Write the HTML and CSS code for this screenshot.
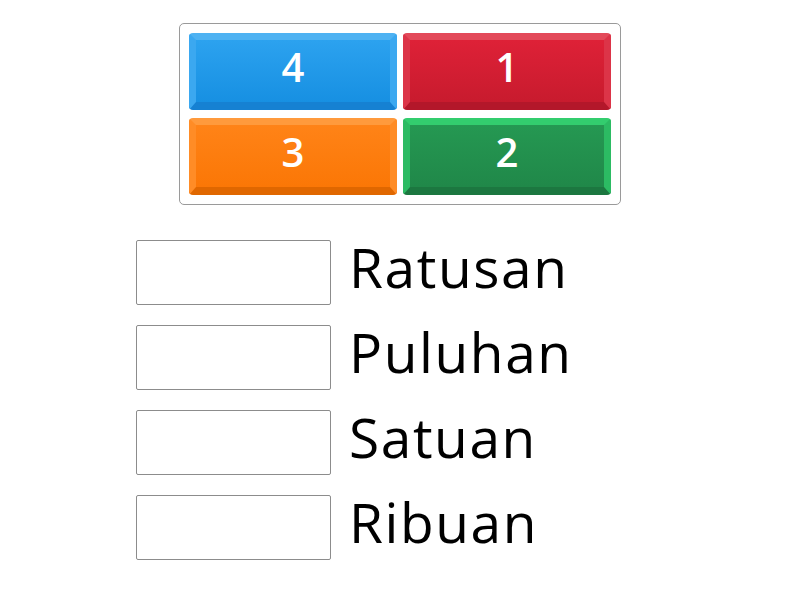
FILE: index.html
```html
<!DOCTYPE html>
<html lang="id">
<head>
    <meta charset="UTF-8">
    <title>Nilai Tempat</title>
    <link rel="stylesheet" href="styles.css">
</head>
<body>
    <div class="tray">
        <div class="tile blue">4</div>
        <div class="tile red">1</div>
        <div class="tile orange">3</div>
        <div class="tile green">2</div>
    </div>

    <div class="targets">
        <div class="row">
            <div class="slot"></div>
            <div class="label">Ratusan</div>
        </div>
        <div class="row">
            <div class="slot"></div>
            <div class="label">Puluhan</div>
        </div>
        <div class="row">
            <div class="slot"></div>
            <div class="label">Satuan</div>
        </div>
        <div class="row">
            <div class="slot"></div>
            <div class="label">Ribuan</div>
        </div>
    </div>
</body>
</html>
```

FILE: styles.css
```css
* {
    box-sizing: border-box;
}

body {
    margin: 0;
    font-family: 'Open Sans', 'Noto Sans', sans-serif;
    background-color: #ffffff;
    color: #000000;
}

.tray {
    width: 442px;
    margin: 23px auto 0;
    padding: 9px;
    border: 1px solid #9a9a9a;
    border-radius: 5px;
    display: grid;
    grid-template-columns: 208px 208px;
    grid-auto-rows: 77px;
    column-gap: 6px;
    row-gap: 8px;
}

.tile {
    border-radius: 4px;
    border-style: solid;
    border-width: 7px 7px 8px 7px;
    color: #ffffff;
    font-size: 40px;
    font-weight: 600;
    line-height: 1;
    display: flex;
    align-items: center;
    justify-content: center;
    padding-bottom: 8px;
}

.tile.blue {
    background: linear-gradient(#2ca2ef, #1790e2);
    border-color: #4eb2f2 #3ba8f0 #1681d2 #3ba8f0;
}

.tile.red {
    background: linear-gradient(#de2137, #c81b2e);
    border-color: #e34a5a #dc3448 #b3172a #dc3448;
}

.tile.orange {
    background: linear-gradient(#ff8317, #fb7706);
    border-color: #ff9a3c #ff8c26 #e06700 #ff8c26;
}

.tile.green {
    background: linear-gradient(#259852, #208849);
    border-color: #33cd6e #2cbb63 #1c7740 #2cbb63;
}

.targets {
    padding: 35px 0 0 136px;
    display: flex;
    flex-direction: column;
    gap: 20px;
}

.row {
    display: flex;
    align-items: center;
    height: 65px;
}

.slot {
    flex-shrink: 0;
    width: 195px;
    height: 65px;
    border: 1px solid #8c8c8c;
    border-radius: 2px;
}

.label {
    margin-left: 18px;
    font-size: 55px;
    letter-spacing: 1.6px;
    line-height: 1;
    padding-bottom: 12px;
}
```
